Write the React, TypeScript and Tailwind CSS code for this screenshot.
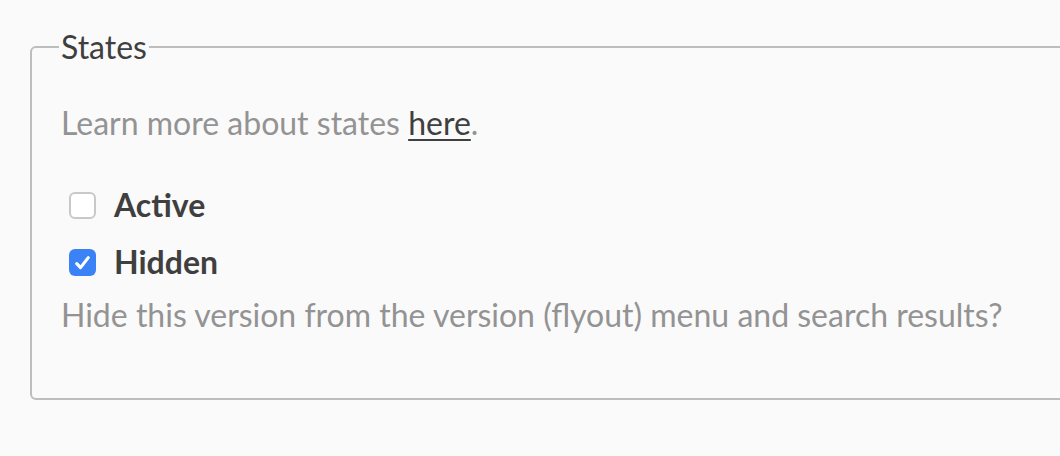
export default function App() {
  return (
    <div className="h-[456px] w-[1060px] overflow-hidden bg-[#fafafa] pt-[30px] font-['Lato','Open_Sans',sans-serif]">
      <fieldset className="ml-[30px] w-[1080px] rounded-[6px] border-2 border-[#bdbdbd] px-[29px] pb-[63px]">
        <legend className="-ml-[2px] px-[2px] text-[32px] leading-[34px] text-[#3f3f3f]">States</legend>
        <p className="mt-[39px] text-[32px] leading-[40px] text-[#939393]">
          Learn more about states{" "}
          <a href="#" className="text-[#3f3f3f] underline decoration-2 underline-offset-[4px]">
            here
          </a>
          .
        </p>
        <div className="mt-[42px] flex flex-col gap-[17px]">
          <label className="flex items-center gap-[18px] pl-[8px]">
            <span className="h-[27px] w-[27px] rounded-[6px] border-2 border-[#c8c8c8] bg-white" />
            <span className="text-[32px] font-bold leading-[40px] text-[#3f3f3f]">Active</span>
          </label>
          <label className="flex items-center gap-[18px] pl-[8px]">
            <span className="flex h-[27px] w-[27px] items-center justify-center rounded-[6px] bg-[#3b82f6]">
              <svg viewBox="0 0 16 16" className="h-[21px] w-[21px]" fill="none" stroke="white" strokeWidth="2.4" strokeLinecap="round" strokeLinejoin="round">
                <path d="M3.6 8.8l2.9 3.1 5.9-7.6" />
              </svg>
            </span>
            <span className="text-[32px] font-bold leading-[40px] text-[#3f3f3f]">Hidden</span>
          </label>
        </div>
        <p className="mt-[13px] text-[32px] leading-[40px] text-[#939393]">
          Hide this version from the version (flyout) menu and search results?
        </p>
      </fieldset>
    </div>
  );
}
